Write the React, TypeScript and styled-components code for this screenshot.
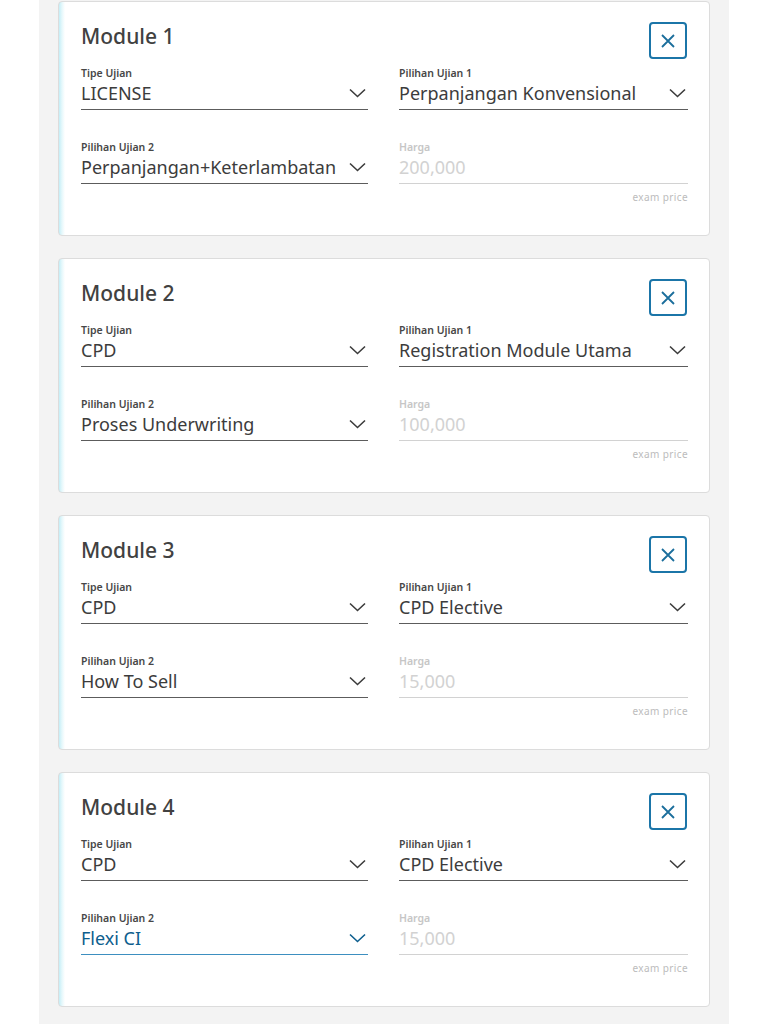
import React from "react";
import styled, { createGlobalStyle } from "styled-components";

const GlobalStyle = createGlobalStyle`
  html, body {
    margin: 0;
    padding: 0;
    background: #ffffff;
    font-family: "Noto Sans", "Lato", sans-serif;
  }
`;

const Page = styled.div`
  width: 768px;
  height: 1024px;
  overflow: hidden;
  background: #ffffff;
`;

const Panel = styled.div`
  margin: 0 39px;
  min-height: 1024px;
  background: #f3f3f3;
  padding: 1px 19px 0 19px;
  display: flex;
  flex-direction: column;
  gap: 22px;
`;

const Card = styled.div`
  height: 235px;
  box-sizing: border-box;
  border: 1px solid #dcdcdc;
  border-radius: 4px;
  background: linear-gradient(to right, #c4eef7 0, #e6f8fb 3px, #ffffff 6px);
  padding: 20px 22px 0 22px;
`;

const Header = styled.div`
  display: flex;
  justify-content: space-between;
  align-items: flex-start;
  margin-bottom: 7px;
`;

const Title = styled.h2`
  margin: 0;
  font-size: 21px;
  line-height: 28px;
  font-weight: 500;
  color: #414141;
`;

const CloseButton = styled.button`
  width: 38px;
  height: 37px;
  border: 2px solid #1b75a8;
  border-radius: 4px;
  background: #ffffff;
  display: flex;
  align-items: center;
  justify-content: center;
  padding: 0;
  color: #1b6e9c;
  cursor: pointer;
`;

const Fields = styled.div`
  display: grid;
  grid-template-columns: 287px 289px;
  column-gap: 31px;
  row-gap: 30px;
`;

type Tone = "normal" | "disabled" | "active";

const Field = styled.div<{ $tone: Tone }>`
  display: flex;
  flex-direction: column;
  border-bottom: 1.5px solid
    ${(p) => (p.$tone === "disabled" ? "#d2d2d2" : p.$tone === "active" ? "#3d8fc0" : "#5c5c5c")};
`;

const Label = styled.span<{ $tone: Tone }>`
  font-size: 10.5px;
  line-height: 14px;
  font-weight: 600;
  color: ${(p) => (p.$tone === "disabled" ? "#c6c6c6" : "#474747")};
`;

const ValueRow = styled.div<{ $tone: Tone }>`
  display: flex;
  align-items: center;
  justify-content: space-between;
  height: 26px;
  padding-bottom: 3px;
  font-size: 18px;
  color: ${(p) => (p.$tone === "disabled" ? "#d2d2d2" : p.$tone === "active" ? "#0d5e8e" : "#3c3c3c")};
`;

const Chevron = styled.svg`
  flex: none;
  margin-right: 2px;
`;

const Hint = styled.div`
  grid-column: 2;
  margin-top: -23px;
  text-align: right;
  font-size: 10px;
  line-height: 12px;
  color: #bcbcbc;
  letter-spacing: 0.4px;
`;

type ModuleData = {
  title: string;
  tipe: string;
  pilihan1: string;
  pilihan2: string;
  harga: string;
  active?: boolean;
};

const modules: ModuleData[] = [
  { title: "Module 1", tipe: "LICENSE", pilihan1: "Perpanjangan Konvensional", pilihan2: "Perpanjangan+Keterlambatan", harga: "200,000" },
  { title: "Module 2", tipe: "CPD", pilihan1: "Registration Module Utama", pilihan2: "Proses Underwriting", harga: "100,000" },
  { title: "Module 3", tipe: "CPD", pilihan1: "CPD Elective", pilihan2: "How To Sell", harga: "15,000" },
  { title: "Module 4", tipe: "CPD", pilihan1: "CPD Elective", pilihan2: "Flexi CI", harga: "15,000", active: true },
];

const SelectField: React.FC<{ label: string; value: string; tone?: Tone }> = ({ label, value, tone = "normal" }) => (
  <Field $tone={tone}>
    <Label $tone={tone}>{label}</Label>
    <ValueRow $tone={tone}>
      <span>{value}</span>
      <Chevron width="17" height="10" viewBox="0 0 17 10" fill="none">
        <polyline points="1,1.5 8.5,8.5 16,1.5" stroke={tone === "active" ? "#0d5e8e" : "#3c3c3c"} strokeWidth="1.6" />
      </Chevron>
    </ValueRow>
  </Field>
);

const ModuleCard: React.FC<{ data: ModuleData }> = ({ data }) => (
  <Card>
    <Header>
      <Title>{data.title}</Title>
      <CloseButton aria-label="remove">
        <svg width="16" height="16" viewBox="0 0 16 16" fill="none">
          <path d="M2 2 L14 14 M14 2 L2 14" stroke="currentColor" strokeWidth="1.8" />
        </svg>
      </CloseButton>
    </Header>
    <Fields>
      <SelectField label="Tipe Ujian" value={data.tipe} />
      <SelectField label="Pilihan Ujian 1" value={data.pilihan1} />
      <SelectField label="Pilihan Ujian 2" value={data.pilihan2} tone={data.active ? "active" : "normal"} />
      <Field $tone="disabled">
        <Label $tone="disabled">Harga</Label>
        <ValueRow $tone="disabled">{data.harga}</ValueRow>
      </Field>
      <Hint>exam price</Hint>
    </Fields>
  </Card>
);

export default function App() {
  return (
    <Page>
      <GlobalStyle />
      <Panel>
        {modules.map((m) => (
          <ModuleCard key={m.title} data={m} />
        ))}
      </Panel>
    </Page>
  );
}
